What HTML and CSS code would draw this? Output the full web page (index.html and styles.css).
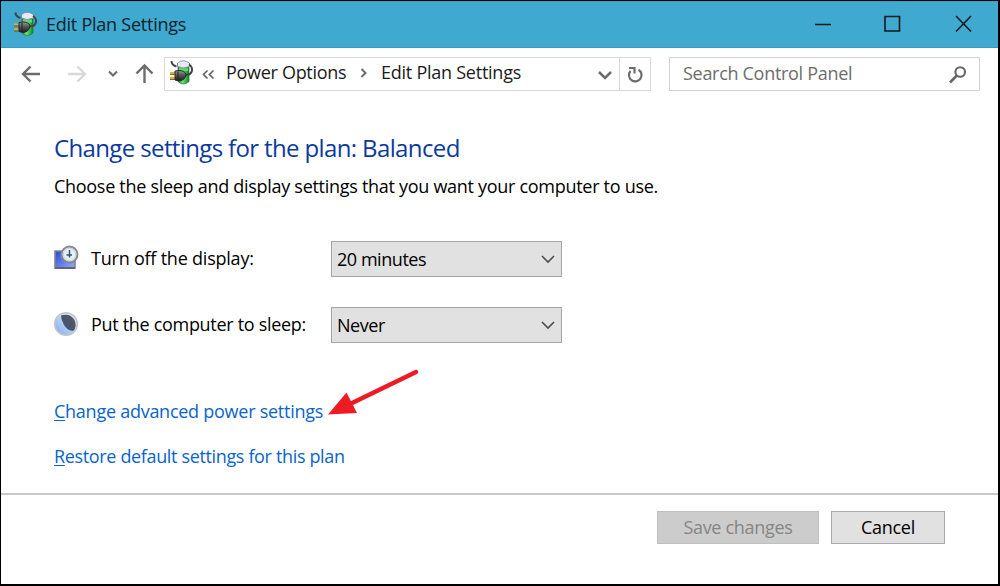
FILE: index.html
```html
<!DOCTYPE html>
<html lang="en">
<head>
<meta charset="utf-8">
<title>Edit Plan Settings</title>
<link rel="stylesheet" href="styles.css">
</head>
<body>
<svg class="defs" aria-hidden="true">
  <defs>
    <linearGradient id="cell" x1="0" x2="1"><stop offset="0" stop-color="#168a27"/><stop offset=".4" stop-color="#6ee57b"/><stop offset="1" stop-color="#078a1a"/></linearGradient>
    <linearGradient id="plugbody" x1="0" y1="0" x2="0" y2="1"><stop offset="0" stop-color="#999"/><stop offset=".45" stop-color="#555"/><stop offset="1" stop-color="#1b1b1b"/></linearGradient>
    <linearGradient id="screen" x1="0" x2="1" y2="1"><stop offset="0" stop-color="#2747d8"/><stop offset="1" stop-color="#91adff"/></linearGradient>
    <linearGradient id="orb" x1="0" y1="1" x2="1" y2="0"><stop offset="0" stop-color="#7fa6ee"/><stop offset=".45" stop-color="#b4cdf5"/><stop offset="1" stop-color="#eef1f4"/></linearGradient>
    <linearGradient id="shade" x1="0" y1="1" x2="1" y2="0"><stop offset="0" stop-color="#3c64b4"/><stop offset=".45" stop-color="#4a5368"/><stop offset="1" stop-color="#5c5c60"/></linearGradient>
    <symbol id="power" viewBox="0 0 25 26">
      <path d="M9 4v18q5 5 11 0V4z" fill="url(#cell)" stroke="#237331" stroke-width=".7"/>
      <path d="M8.500 7V3.500Q14 -1 20.500 3.500V7Q14 10 8.500 7z" fill="#e7e9f7" stroke="#777b9c" stroke-width=".8"/>
      <path d="M10 8.500q4 2 9 0v3h-9z" fill="#65d770"/>
      <path d="M2.500 1.500q0 4 5 5.500M16 15q6 1 7-4 .500-4-3-6" fill="none" stroke="#414548" stroke-width="2"/>
      <path d="M1 13.500h6M1 18.500h6" stroke="#efac18" stroke-width="2.200"/>
      <path d="M1 15h5M1 20h5" stroke="#654709" stroke-width=".8"/>
      <path d="M6 11.500l4-.5q6 0 7 4-1 6-7 6.500L6 20.500z" fill="url(#plugbody)" stroke="#282828"/>
      <path d="M9 12v8" stroke="#252525"/>
    </symbol>
  </defs>
</svg>
<div class="window">
  <header class="titlebar">
    <svg class="app-icon"><use href="#power"/></svg>
    <span class="title">Edit Plan Settings</span>
    <svg class="caption" viewBox="0 0 158 20" fill="none" stroke="#10191d" stroke-width="1.600">
      <path d="M0 11.500h16M70 3.500h14.500V18H70zM141 3l15 15.500M156 3l-15 15.500"/>
    </svg>
  </header>
  <nav class="toolbar">
    <svg class="nav-icons" viewBox="0 0 134 24" fill="none" stroke="#6c6c6c" stroke-width="2.400">
      <path d="M19 12H2M9.500 4.500L2 12l7.500 7.500"/>
      <path d="M47 12h17M56.500 4.500L64 12l-7.500 7.500" stroke="#d9d9d9"/>
      <path d="M88 9.500l4 4 4-4" stroke-width="2.100"/>
      <path d="M123.500 21V4M115.500 11.500l8-8 8 8"/>
    </svg>
    <div class="address">
      <svg class="path-icon"><use href="#power"/></svg>
      <svg class="laquo" viewBox="0 0 13 12"><path d="M5.500 1.500L1.500 5.500l4 4M11.500 1.500l-4 4 4 4" fill="none" stroke="#5f5f5f" stroke-width="1.600"/></svg>
      <span class="crumb crumb-parent">Power Options</span>
      <svg class="sep" viewBox="0 0 8 10"><path d="M1.500 1l4 4-4 4" fill="none" stroke="#6c6c6c" stroke-width="2"/></svg>
      <span class="crumb">Edit Plan Settings</span>
      <svg class="drop" viewBox="0 0 16 12"><path d="M2 3l6 6 6-6" fill="none" stroke="#6c6c6c" stroke-width="2.500"/></svg>
      <div class="refresh"><svg viewBox="0 0 18 20"><path d="M12.500 5.200a6.300 6.300 0 1 1-8 1.300M3 3.500h5.500V9" fill="none" stroke="#6c6c6c" stroke-width="2.200" transform="translate(0 .5)"/></svg></div>
    </div>
    <div class="search">
      <span>Search Control Panel</span>
      <svg viewBox="0 0 20 20"><circle cx="12.200" cy="8" r="4.800" fill="none" stroke="#666" stroke-width="2.100"/><path d="M8.800 11.500L2 18.500" stroke="#666" stroke-width="2.600"/></svg>
    </div>
  </nav>
  <main class="content">
    <h1>Change settings for the plan: Balanced</h1>
    <p class="intro">Choose the sleep and display settings that you want your computer to use.</p>
    <div class="setting">
      <svg class="row-icon" viewBox="0 0 26 26">
        <path d="M2 6h20v17H2z" fill="url(#screen)" stroke="#81858c" stroke-width="1.600"/>
        <path d="M2 23h20" stroke="#666" stroke-width="2"/>
        <circle cx="16.500" cy="9.500" r="8" fill="#e9f0f5" stroke="#85898c" stroke-width="2"/>
        <circle cx="16.500" cy="9.500" r="6.200" fill="none" stroke="#c3d2dc"/>
        <path d="M16.500 5V12.500M13.500 10h5.500" stroke="#35536a" stroke-width="1.500"/>
      </svg>
      <label class="label-display">Turn off the display:</label>
      <div class="select"><span class="value-time">20 minutes</span><svg viewBox="0 0 16 12"><path d="M2 3l6 6 6-6" fill="none" stroke="#4c4c4c" stroke-width="1.600"/></svg></div>
    </div>
    <div class="setting">
      <svg class="row-icon" viewBox="0 0 26 26">
        <circle cx="13" cy="13" r="11.300" fill="url(#orb)" stroke="#c1c6cc" stroke-width="1.600"/>
        <path d="M8 4.500Q17 1.500 21.500 9q3 7-1.500 11-6-.500-9-6Q8 9 8 4.500z" fill="url(#shade)"/>
      </svg>
      <label class="label-sleep">Put the computer to sleep:</label>
      <div class="select"><span class="value-never">Never</span><svg viewBox="0 0 16 12"><path d="M2 3l6 6 6-6" fill="none" stroke="#4c4c4c" stroke-width="1.600"/></svg></div>
    </div>
    <div class="links">
      <a class="link-advanced"><u>C</u>hange advanced power settings</a>
      <a class="link-restore"><u>R</u>estore default settings for this plan</a>
      <svg class="pointer" viewBox="0 0 92 50"><path d="M88 4L20 37" stroke="#ed1c24" stroke-width="4.500" stroke-linecap="round"/><path d="M0 46.500L18.500 24.500 29 45z" fill="#ed1c24"/></svg>
    </div>
  </main>
  <footer class="actions">
    <button class="save" disabled>Save changes</button>
    <button class="cancel">Cancel</button>
  </footer>
</div>
</body>
</html>
```
FILE: styles.css
```css
* { box-sizing: border-box; }
body { margin: 0; font-family: "Open Sans", "Noto Sans", sans-serif; font-size: 18px; color: #000; }
svg { display: block; flex: none; }
span, label, a, p, h1 { white-space: nowrap; }
.defs { position: absolute; width: 0; height: 0; }
.window { width: 1000px; height: 586px; display: flex; flex-direction: column; background: #fff; border: 1px solid #000; border-right-width: 2px; border-bottom-width: 2px; overflow: hidden; }
.titlebar { height: 47px; flex: none; display: flex; align-items: center; background: #40a9cf; padding: 0 25px 2px 12px; border-top: 1px solid #38a0c6; border-bottom: 1px solid #359bc0; }
.app-icon { width: 25px; height: 26px; }
.title { margin-left: 8px; font-size: 18px; letter-spacing: -.24px; color: #09222c; }
.caption { width: 158px; height: 20px; margin-left: auto; margin-top: -2px; }
.toolbar { height: 51px; flex: none; display: flex; align-items: center; padding: 0 18px 0 20px; }
.nav-icons { width: 134px; height: 24px; }
.address { width: 487px; height: 34px; margin-left: 9px; display: flex; align-items: center; border: 1px solid #d9d9d9; padding-left: 4px; }
.path-icon { width: 25px; height: 27px; margin-bottom: 2px; }
.laquo { width: 13px; height: 12px; margin-left: 8px; margin-top: 3px; }
.crumb { font-size: 18px; letter-spacing: -.25px; line-height: 26px; margin-bottom: 3px; color: #1a1a1a; }
.crumb-parent { margin-left: 11px; width: 120px; letter-spacing: -.3px; }
.sep { width: 8px; height: 10px; margin: 0 13px 1px 14px; }
.drop { width: 16px; height: 12px; margin: 3px 6px 0 auto; }
.refresh { width: 31px; height: 32px; border-left: 1px solid #d9d9d9; display: flex; align-items: center; justify-content: center; }
.refresh svg { width: 18px; height: 20px; }
.search { width: 311px; height: 34px; margin-left: auto; border: 1px solid #d2d2d2; display: flex; align-items: center; justify-content: space-between; padding: 0 11px 0 13px; color: #6d6d6d; letter-spacing: -.3px; }
.search span { margin-bottom: 2px; }
.search svg { width: 20px; height: 20px; }
.content { flex: 1; padding: 34px 0 0 53px; }
h1 { margin: 0; font-size: 24px; font-weight: 400; line-height: 30px; letter-spacing: -.63px; color: #0b3a9f; }
.intro { margin: 11px 0 43px; line-height: 24px; letter-spacing: -.29px; }
.setting { height: 36px; margin-bottom: 30px; display: grid; grid-template-columns: 37px 240px 231px; align-items: center; }
.row-icon { width: 26px; height: 26px; margin-left: -1px; margin-bottom: 2px; }
.label-display { letter-spacing: -.22px; margin-bottom: 2px; }
.label-sleep { letter-spacing: -.31px; margin-bottom: 2px; }
.select { height: 36px; display: flex; align-items: center; justify-content: space-between; border: 1px solid #a5a5a5; background: #e1e1e1; padding: 0 5px; letter-spacing: -.45px; }
.select svg { width: 16px; height: 12px; }
.links { position: relative; display: flex; flex-direction: column; align-items: flex-start; gap: 20px; margin-top: 56px; color: #0864cd; letter-spacing: -.35px; line-height: 25px; }
.link-advanced { letter-spacing: -.26px; }
.links u { text-underline-offset: 2px; text-decoration-thickness: 1px; }
.pointer { position: absolute; left: 274px; top: -31px; width: 92px; height: 50px; }
.actions { height: 91px; flex: none; display: flex; justify-content: flex-end; align-items: flex-start; gap: 12px; padding: 16px 53px 0 0; border-top: 2px solid #c9c9c9; }
button { height: 33px; border: 1px solid #aaa; background: #e1e1e1; font: inherit; letter-spacing: -.3px; color: #000; padding: 0 0 2px; }
.save { width: 162px; background: #ccc; border-color: #bfbfbf; color: #858585; }
.cancel { width: 114px; }
```
